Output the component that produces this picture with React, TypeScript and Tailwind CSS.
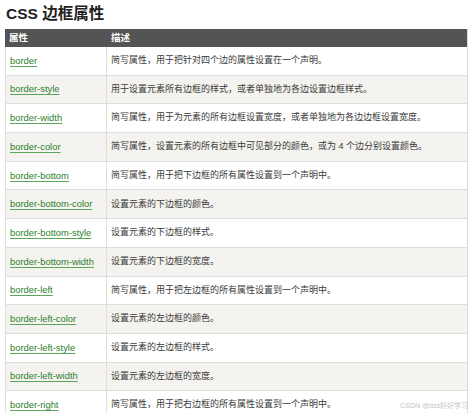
const rows: [string, string][] = [
  ["border", "简写属性，用于把针对四个边的属性设置在一个声明。"],
  ["border-style", "用于设置元素所有边框的样式，或者单独地为各边设置边框样式。"],
  ["border-width", "简写属性，用于为元素的所有边框设置宽度，或者单独地为各边边框设置宽度。"],
  ["border-color", "简写属性，设置元素的所有边框中可见部分的颜色，或为 4 个边分别设置颜色。"],
  ["border-bottom", "简写属性，用于把下边框的所有属性设置到一个声明中。"],
  ["border-bottom-color", "设置元素的下边框的颜色。"],
  ["border-bottom-style", "设置元素的下边框的样式。"],
  ["border-bottom-width", "设置元素的下边框的宽度。"],
  ["border-left", "简写属性，用于把左边框的所有属性设置到一个声明中。"],
  ["border-left-color", "设置元素的左边框的颜色。"],
  ["border-left-style", "设置元素的左边框的样式。"],
  ["border-left-width", "设置元素的左边框的宽度。"],
  ["border-right", "简写属性，用于把右边框的所有属性设置到一个声明中。"],
];

export default function App() {
  return (
    <div className="relative h-[413px] w-[474px] overflow-hidden bg-white font-['Liberation_Sans','Noto_Sans_CJK_SC',sans-serif]">
      <h1 className="h-[29px] pl-[6px] pt-[4px] text-[15.5px] font-bold leading-[20px] text-[#222]">CSS 边框属性</h1>

      <div className="ml-[5px] w-[463px] border-r border-[#dcdcdc]">
        <div className="grid h-[18px] grid-cols-[102px_1fr] bg-[#545454] text-[9.5px] font-bold leading-[18px] text-white">
          <div className="pl-[4px]">属性</div>
          <div className="pl-[4px]">描述</div>
        </div>

        {rows.map(([name, desc], i) => (
          <div
            key={name}
            className={`grid h-[28.7px] grid-cols-[102px_1fr] border-b border-[#dedede] ${i % 2 === 1 ? "bg-[#f4f3ef]" : "bg-white"}`}
          >
            <div className="flex items-center border-r border-l border-[#dedede] pl-[4px]">
              <span className="text-[9.4px] text-[#2a7f2a] underline decoration-[#5aa55a] underline-offset-2">{name}</span>
            </div>
            <div className="flex items-center pl-[4px] text-[9px] text-[#3a3a3a]">{desc}</div>
          </div>
        ))}
      </div>

      <div className="absolute bottom-[2px] right-[6px] text-[7px] text-[#c4c4c4]">CSDN @dzs好好学习</div>
    </div>
  );
}
